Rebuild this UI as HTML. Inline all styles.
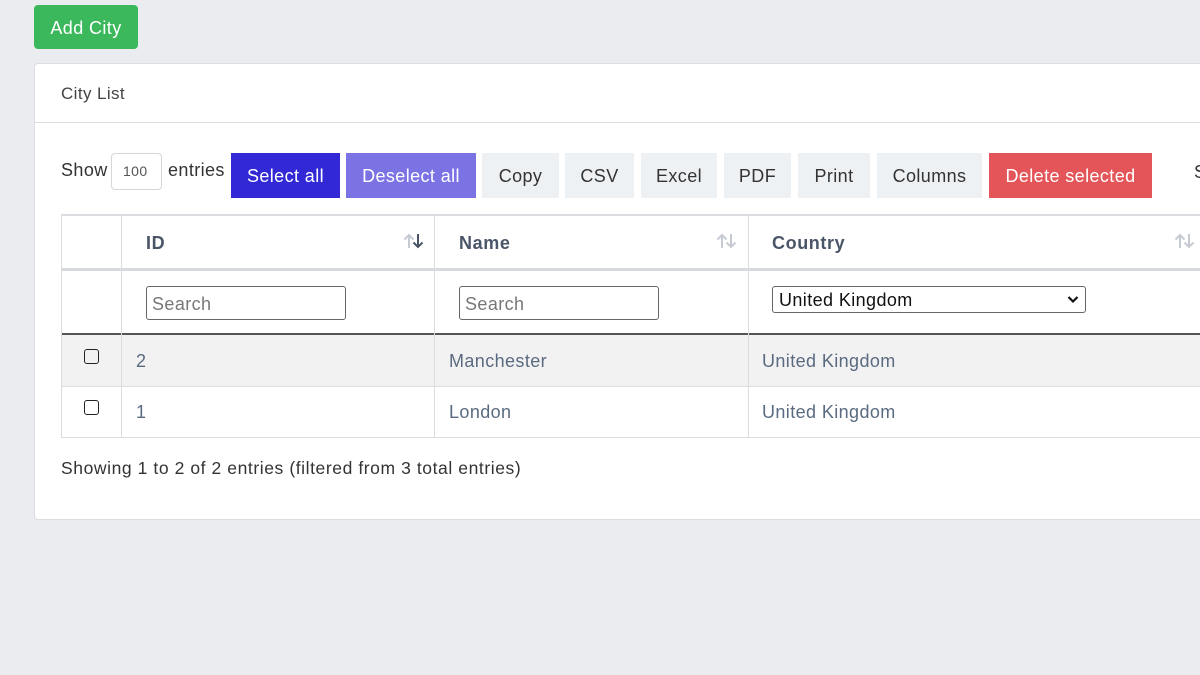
<!DOCTYPE html>
<html><head><meta charset="utf-8"><style>
*{box-sizing:border-box;margin:0;padding:0}
body{width:1200px;height:675px;background:#ebecef;font-family:"Liberation Sans",sans-serif;overflow:hidden;position:relative;color:#333;letter-spacing:0.4px}
.a{position:absolute}
.btn{position:absolute;top:153px;height:45px;line-height:47px;text-align:center;font-size:18px;background:#eef1f4;color:#333}
.card{position:absolute;left:34px;top:63px;width:1200px;height:457px;background:#fff;border:1px solid #dcdde1;border-radius:4px}
.vl{position:absolute;width:1px;background:#dcdde1}
.hl{position:absolute;height:1px;background:#dcdde1}
.th{position:absolute;top:233px;font-size:18px;font-weight:bold;color:#4a5568;letter-spacing:0.6px}
.td{position:absolute;font-size:18px;color:#5a6a80}
.inp{position:absolute;top:286px;width:200px;height:34px;border:1px solid #666;border-radius:3px;font-size:18px;color:#777;padding:7px 5px}
.cb{position:absolute;left:84px;width:15px;height:15px;border:1.5px solid #222;border-radius:3px}
.sort{position:absolute;top:233px}
</style></head><body>
<div class="a" style="left:34px;top:5px;width:104px;height:44px;background:#3cb85c;border-radius:4px;color:#fff;font-size:18px;line-height:46px;text-align:center">Add City</div>
<div class="card"></div>
<div class="a" style="left:61px;top:84px;font-size:17px;color:#444">City List</div>
<div class="hl" style="left:35px;top:122px;width:1165px"></div>
<div class="a" style="left:61px;top:160px;font-size:18px;color:#333">Show</div>
<div class="a" style="left:111px;top:153px;width:51px;height:37px;border:1px solid #d4d7dc;border-radius:4px;font-size:14px;color:#555;padding:9px 0 0 11px">100</div>
<div class="a" style="left:168px;top:160px;font-size:18px;color:#333">entries</div>
<div class="btn" style="left:231px;width:109px;background:#3228d6;color:#fff">Select all</div>
<div class="btn" style="left:346px;width:130px;background:#7b73e4;color:#fff">Deselect all</div>
<div class="btn" style="left:482px;width:77px">Copy</div>
<div class="btn" style="left:565px;width:69px">CSV</div>
<div class="btn" style="left:641px;width:76px">Excel</div>
<div class="btn" style="left:724px;width:67px">PDF</div>
<div class="btn" style="left:798px;width:72px">Print</div>
<div class="btn" style="left:877px;width:105px">Columns</div>
<div class="btn" style="left:989px;width:163px;background:#e4555a;color:#fff">Delete selected</div>
<div class="a" style="left:1194px;top:162px;font-size:18px">S</div>
<div class="a" style="left:61px;top:214px;width:1140px;height:2px;background:#dcdde1"></div>
<div class="a" style="left:61px;top:268px;width:1140px;height:3px;background:#d6d9de"></div>
<div class="a" style="left:61px;top:333px;width:1140px;height:2px;background:#555"></div>
<div class="a" style="left:62px;top:335px;width:1140px;height:51px;background:#f2f2f2"></div>
<div class="hl" style="left:61px;top:386px;width:1140px"></div>
<div class="hl" style="left:61px;top:437px;width:1140px"></div>
<div class="vl" style="left:61px;top:214px;height:224px"></div>
<div class="vl" style="left:121px;top:214px;height:224px"></div>
<div class="vl" style="left:434px;top:214px;height:224px"></div>
<div class="vl" style="left:748px;top:214px;height:224px"></div>
<div class="th" style="left:146px">ID</div>
<div class="th" style="left:459px">Name</div>
<div class="th" style="left:772px">Country</div>
<svg class="sort" style="left:403px" width="22" height="16" viewBox="0 0 22 16" fill="none" stroke-width="2"><path d="M6 15V2M1.5 6.5L6 2l4.5 4.5" stroke="#c5cad3"/><path d="M15 1v13M10.5 9.5L15 14l4.5-4.5" stroke="#4a5568"/></svg>
<svg class="sort" style="left:716px" width="22" height="16" viewBox="0 0 22 16" fill="none" stroke-width="2" stroke="#c5cad3"><path d="M6 15V2M1.5 6.5L6 2l4.5 4.5"/><path d="M15 1v13M10.5 9.5L15 14l4.5-4.5"/></svg>
<svg class="sort" style="left:1174px" width="22" height="16" viewBox="0 0 22 16" fill="none" stroke-width="2" stroke="#c5cad3"><path d="M6 15V2M1.5 6.5L6 2l4.5 4.5"/><path d="M15 1v13M10.5 9.5L15 14l4.5-4.5"/></svg>
<div class="inp" style="left:146px">Search</div>
<div class="inp" style="left:459px">Search</div>
<div class="a" style="left:772px;top:286px;width:314px;height:27px;border:1px solid #666;border-radius:3px;font-size:18px;color:#111;padding:3px 6px">United Kingdom<svg style="position:absolute;right:6px;top:8px" width="12" height="9" viewBox="0 0 12 9"><path d="M1.5 2l4.5 4.5L10.5 2" stroke="#111" stroke-width="2.2" fill="none"/></svg></div>
<div class="cb" style="top:349px"></div>
<div class="cb" style="top:400px"></div>
<div class="td" style="left:136px;top:351px">2</div>
<div class="td" style="left:449px;top:351px">Manchester</div>
<div class="td" style="left:762px;top:351px">United Kingdom</div>
<div class="td" style="left:136px;top:402px">1</div>
<div class="td" style="left:449px;top:402px">London</div>
<div class="td" style="left:762px;top:402px">United Kingdom</div>
<div class="a" style="left:61px;top:458px;font-size:17.5px;color:#333;letter-spacing:0.58px">Showing 1 to 2 of 2 entries (filtered from 3 total entries)</div>
</body></html>
